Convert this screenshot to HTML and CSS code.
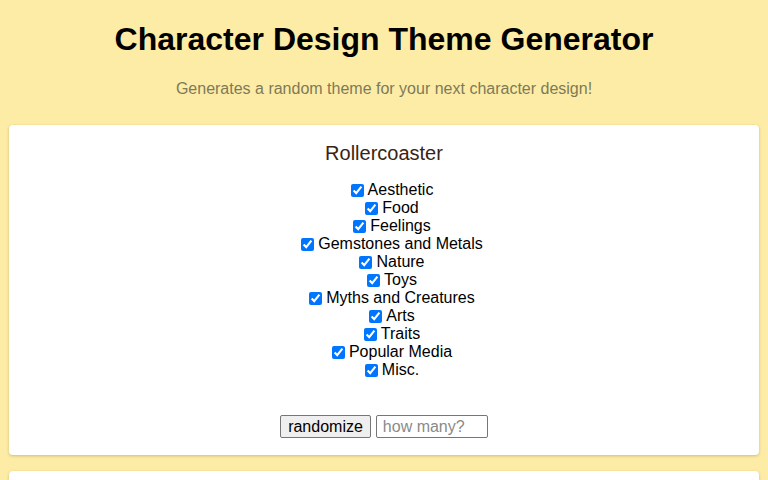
FILE: index.html
```html
<!DOCTYPE html>
<html>
<head>
<meta charset="utf-8">
<link rel="stylesheet" href="styles.css">
</head>
<body>
<header class="header">
  <h1 class="title">Character Design Theme Generator</h1>
  <p class="subtitle">Generates a random theme for your next character design!</p>
</header>
<main class="cards">
  <section class="card">
    <h2 class="card-title">Rollercoaster</h2>
    <div class="options">
      <label class="option"><input type="checkbox" checked>Aesthetic</label>
      <label class="option"><input type="checkbox" checked>Food</label>
      <label class="option"><input type="checkbox" checked>Feelings</label>
      <label class="option"><input type="checkbox" checked>Gemstones and Metals</label>
      <label class="option"><input type="checkbox" checked>Nature</label>
      <label class="option"><input type="checkbox" checked>Toys</label>
      <label class="option"><input type="checkbox" checked>Myths and Creatures</label>
      <label class="option"><input type="checkbox" checked>Arts</label>
      <label class="option"><input type="checkbox" checked>Traits</label>
      <label class="option"><input type="checkbox" checked>Popular Media</label>
      <label class="option"><input type="checkbox" checked>Misc.</label>
    </div>
    <div class="controls">
      <button class="btn">randomize</button>
      <input class="count" type="text" placeholder="how many?">
    </div>
  </section>
  <section class="card card-next"></section>
</main>
</body>
</html>
```
FILE: styles.css
```css
html, body {
  margin: 0;
  padding: 0;
  background: #fdeca5;
  font-family: "Liberation Sans", Arial, sans-serif;
}
body {
  padding: 0 9px;
}
.header {
  text-align: center;
}
.title {
  margin: 21px 0 0;
  font-size: 32px;
  line-height: 37px;
  font-weight: bold;
  color: #000;
}
.subtitle {
  margin: 22px 0 0;
  font-size: 16px;
  line-height: 18px;
  color: #7d7a58;
}
.cards {
  margin-top: 27px;
  display: flex;
  flex-direction: column;
  gap: 16px;
}
.card {
  background: #fff;
  border-radius: 4px;
  box-shadow: 0 1px 3px rgba(120, 100, 40, 0.35);
  padding: 17px 16px 17px;
  text-align: center;
}
.card-next {
  height: 60px;
}
.card-title {
  margin: 0;
  font-size: 20px;
  line-height: 23px;
  font-weight: normal;
  color: #3a2313;
}
.options {
  margin-top: 16px;
  display: flex;
  flex-direction: column;
  align-items: center;
}
.option {
  display: flex;
  align-items: center;
  padding-left: 16px;
  font-size: 16px;
  line-height: 18px;
  height: 18px;
  color: #000;
}
.option input {
  width: 13px;
  height: 13px;
  margin: 0 4px 0 0;
}
.controls {
  margin-top: 36px;
  display: flex;
  justify-content: center;
  align-items: center;
  gap: 5px;
  height: 23px;
}
.btn {
  font-family: "Liberation Sans", Arial, sans-serif;
  font-size: 16px;
  height: 23px;
  padding: 0 7px;
  margin: 0;
  border: 1px solid #767676;
  border-radius: 2px;
  background: #efefef;
  color: #000;
}
.count {
  font-family: "Liberation Sans", Arial, sans-serif;
  font-size: 16px;
  width: 112px;
  height: 23px;
  box-sizing: border-box;
  padding: 1px 6px;
  margin: 0;
  border: 1px solid #767676;
  border-radius: 2px;
}
.count::placeholder {
  color: #8a8a8a;
}
```
